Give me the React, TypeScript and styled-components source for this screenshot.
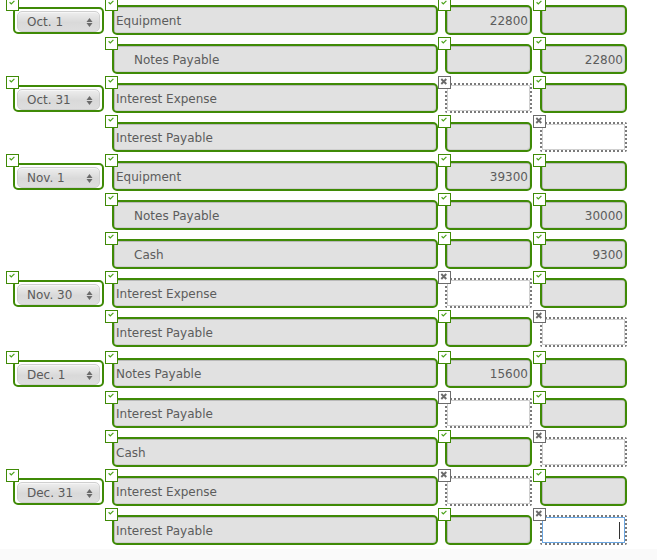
import React from "react";
import styled, { createGlobalStyle, css } from "styled-components";

const Global = createGlobalStyle`
  html, body { margin: 0; padding: 0; background: #ffffff; }
  body { font-family: "DejaVu Sans", Verdana, sans-serif; }
`;

const GREEN = "#3f8a06";

const Page = styled.div`
  width: 657px;
  height: 560px;
  overflow: hidden;
  display: flex;
  flex-direction: column;
`;

const Rows = styled.div`
  display: flex;
  flex-direction: column;
  margin-top: -2px;
`;

const Footer = styled.div`
  flex: 1;
  margin-top: 2px;
  background: #fafafa;
`;

const Row = styled.div<{ $h: number }>`
  display: flex;
  height: ${(p) => p.$h}px;
  flex-shrink: 0;
`;

const Cell = styled.div<{ $w: number; $pl?: number }>`
  position: relative;
  width: ${(p) => p.$w}px;
  padding-left: ${(p) => p.$pl ?? 0}px;
  box-sizing: border-box;
  flex-shrink: 0;
`;

const Mark = styled.span<{ $ok: boolean; $left?: number }>`
  position: absolute;
  top: 0;
  left: ${(p) => p.$left ?? 0}px;
  width: 13px;
  height: 13px;
  box-sizing: border-box;
  border: 1.5px solid ${(p) => (p.$ok ? GREEN : "#6b6b6b")};
  background: #fff;
  z-index: 2;
  display: block;
  svg { display: block; }
`;

const DateWrap = styled.div`
  margin-left: 7px;
  margin-top: 9px;
  width: 91px;
  height: 27px;
  box-sizing: border-box;
  border: 2px solid ${GREEN};
  border-radius: 5px;
  padding: 2px 2px;
  display: flex;
`;

const Select = styled.div`
  flex: 1;
  height: 21px;
  box-sizing: border-box;
  border: 1px solid #cfcfcf;
  border-radius: 5px;
  background: linear-gradient(#eeeeee, #d9d9d9 55%, #dedede);
  box-shadow: inset 0 1px 0 #f6f6f6;
  display: flex;
  align-items: center;
  justify-content: space-between;
  padding: 1px 6px 0 9px;
  font-size: 12px;
  color: #5a5a5a;
`;

const Arrows = styled.span`
  display: flex;
  flex-direction: column;
  align-items: center;
  gap: 1px;
  svg { display: block; }
`;

const Field = styled.div<{ $w: number; $state: "ok" | "bad" | "focus"; $align: "left" | "right"; $indent?: boolean }>`
  margin-left: 7px;
  margin-top: 7px;
  width: ${(p) => p.$w}px;
  height: 30px;
  box-sizing: border-box;
  border-radius: 5px;
  display: flex;
  align-items: center;
  font-size: 12px;
  color: #5c5c5c;
  white-space: nowrap;
  position: relative;
  justify-content: ${(p) => (p.$align === "right" ? "flex-end" : "flex-start")};
  padding: ${(p) => (p.$align === "right" ? "2px 2px 0 0" : p.$indent ? "2px 0 0 20px" : "2px 0 0 2px")};
  ${(p) =>
    p.$state === "ok"
      ? css`
          background: #e1e1e1;
          border: 2px solid ${GREEN};
          box-shadow: inset 1px 1px 0 #b9b9b9, inset -1px -1px 0 #cfcfcf;
        `
      : css`
          background: #fff;
          border: 2px dotted #7a7a7a;
          border-radius: 2px;
          box-shadow: inset 0 0 0 1px ${p.$state === "focus" ? "#6aa6e2" : "#cfcfcf"};
        `}
`;

const Caret = styled.span`
  position: absolute;
  right: 5px;
  top: 5px;
  width: 1px;
  height: 17px;
  background: #333;
`;

const CheckIcon = () => (
  <svg width="10" height="10" viewBox="0 0 10 10">
    <path d="M2.6 3.3 L4.3 4.9 L7.4 1.9" fill="none" stroke="#4aa21a" strokeWidth="1.2" />
  </svg>
);

const CrossIcon = () => (
  <svg width="10" height="10" viewBox="0 0 10 10">
    <path d="M2.3 2 L7.3 7 M7.3 2 L2.3 7" fill="none" stroke="#6b6b6b" strokeWidth="1.9" />
  </svg>
);

type Amt = { v?: string; ok: boolean; focus?: boolean };
type Line = {
  date?: string;
  acc: string;
  indent?: boolean;
  dr: Amt;
  cr: Amt;
  h: number;
};

const lines: Line[] = [
  { date: "Oct. 1", acc: "Equipment", dr: { v: "22800", ok: true }, cr: { ok: true }, h: 39 },
  { acc: "Notes Payable", indent: true, dr: { ok: true }, cr: { v: "22800", ok: true }, h: 39 },
  { date: "Oct. 31", acc: "Interest Expense", dr: { ok: false }, cr: { ok: true }, h: 39 },
  { acc: "Interest Payable", dr: { ok: true }, cr: { ok: false }, h: 39 },
  { date: "Nov. 1", acc: "Equipment", dr: { v: "39300", ok: true }, cr: { ok: true }, h: 39 },
  { acc: "Notes Payable", indent: true, dr: { ok: true }, cr: { v: "30000", ok: true }, h: 39 },
  { acc: "Cash", indent: true, dr: { ok: true }, cr: { v: "9300", ok: true }, h: 39 },
  { date: "Nov. 30", acc: "Interest Expense", dr: { ok: false }, cr: { ok: true }, h: 39 },
  { acc: "Interest Payable", dr: { ok: true }, cr: { ok: false }, h: 41 },
  { date: "Dec. 1", acc: "Notes Payable", dr: { v: "15600", ok: true }, cr: { ok: true }, h: 40 },
  { acc: "Interest Payable", dr: { ok: false }, cr: { ok: true }, h: 39 },
  { acc: "Cash", dr: { ok: true }, cr: { ok: false }, h: 39 },
  { date: "Dec. 31", acc: "Interest Expense", dr: { ok: false }, cr: { ok: true }, h: 39 },
  { acc: "Interest Payable", dr: { ok: true }, cr: { ok: false, focus: true }, h: 39 },
];

const Status = ({ ok, left }: { ok: boolean; left?: number }) => (
  <Mark $ok={ok} $left={left}>
    {ok ? <CheckIcon /> : <CrossIcon />}
  </Mark>
);

const AmountCell = ({ a, w }: { a: Amt; w: number }) => (
  <Cell $w={w}>
    <Status ok={a.ok} />
    <Field $w={87} $align="right" $state={a.ok ? "ok" : a.focus ? "focus" : "bad"}>
      {a.v}
      {a.focus && <Caret />}
    </Field>
  </Cell>
);

export default function App() {
  return (
    <Page>
      <Global />
      <Rows>
        {lines.map((l, i) => (
          <Row key={i} $h={l.h}>
            <Cell $w={105} $pl={6}>
              {l.date && (
                <>
                  <Status ok={true} left={6} />
                  <DateWrap>
                    <Select>
                      <span>{l.date}</span>
                      <Arrows>
                        <svg width="7" height="4" viewBox="0 0 7 4">
                          <path d="M0.5 4 L3.5 0 L6.5 4 Z" fill="#6a6a6a" />
                        </svg>
                        <svg width="7" height="4" viewBox="0 0 7 4">
                          <path d="M0.5 0 L3.5 4 L6.5 0 Z" fill="#6a6a6a" />
                        </svg>
                      </Arrows>
                    </Select>
                  </DateWrap>
                </>
              )}
            </Cell>
            <Cell $w={333}>
              <Status ok={true} />
              <Field $w={326} $align="left" $indent={l.indent} $state="ok">
                {l.acc}
              </Field>
            </Cell>
            <AmountCell a={l.dr} w={95} />
            <AmountCell a={l.cr} w={95} />
          </Row>
        ))}
      </Rows>
      <Footer />
    </Page>
  );
}
